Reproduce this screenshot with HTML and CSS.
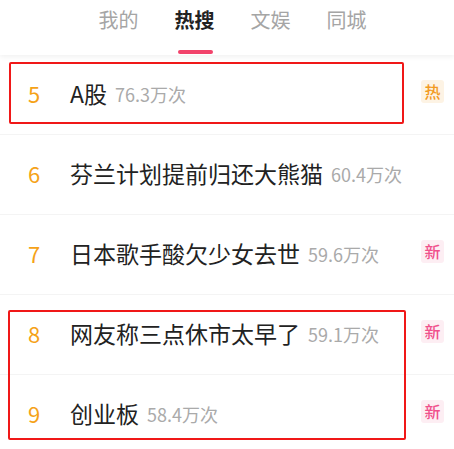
FILE: index.html
```html
<!DOCTYPE html>
<html lang="zh-CN">
<head>
  <meta charset="UTF-8" />
  <meta name="viewport" content="width=device-width, initial-scale=1.0"/>
  <title>热搜</title>
  <link rel="stylesheet" href="styles.css">
</head>
<body>
  <div class="tabs">
    <div class="tab">我的</div>
    <div class="tab active">热搜</div>
    <div class="tab">文娱</div>
    <div class="tab">同城</div>
  </div>

  <div class="list">
    <div class="row">
      <span class="rank">5</span>
      <span class="title">A股</span>
      <span class="count">76.3万次</span>
      <span class="badge hot">热</span>
    </div>
    <div class="row">
      <span class="rank">6</span>
      <span class="title">芬兰计划提前归还大熊猫</span>
      <span class="count">60.4万次</span>
    </div>
    <div class="row">
      <span class="rank">7</span>
      <span class="title">日本歌手酸欠少女去世</span>
      <span class="count">59.6万次</span>
      <span class="badge new">新</span>
    </div>
    <div class="row">
      <span class="rank">8</span>
      <span class="title">网友称三点休市太早了</span>
      <span class="count">59.1万次</span>
      <span class="badge new">新</span>
    </div>
    <div class="row">
      <span class="rank">9</span>
      <span class="title">创业板</span>
      <span class="count">58.4万次</span>
      <span class="badge new">新</span>
    </div>

    <div class="mark mark-one"></div>
    <div class="mark mark-two"></div>
  </div>
</body>
</html>
```

FILE: styles.css
```css
body {
  margin: 0;
  background: #fff;
  font-family: "Noto Sans CJK SC", "Noto Sans", sans-serif;
}

.tabs {
  height: 55px;
  display: flex;
  justify-content: center;
  padding-left: 11px;
  box-shadow: 0 2px 5px rgba(0, 0, 0, 0.06);
}

.tab {
  width: 76px;
  text-align: center;
  font-size: 20px;
  line-height: 40px;
  color: #a5a5a5;
  position: relative;
}

.tab.active {
  color: #222;
  font-weight: bold;
}

.tab.active::after {
  content: "";
  position: absolute;
  left: 21px;
  top: 50px;
  width: 35px;
  height: 4px;
  border-radius: 2px;
  background: #f2436b;
}

.list {
  position: relative;
}

.row {
  height: 80px;
  display: flex;
  align-items: center;
  border-bottom: 1px solid #f4f4f4;
  box-sizing: border-box;
  padding-left: 28px;
  padding-right: 10px;
  padding-bottom: 3px;
}

.rank {
  width: 42px;
  font-size: 22px;
  color: #f5a218;
}

.title {
  font-size: 23px;
  color: #222;
}

.count {
  margin-left: 8px;
  font-size: 18px;
  color: #aaa;
  flex: 1;
  padding-top: 2px;
}

.badge {
  width: 23px;
  height: 23px;
  border-radius: 3px;
  font-size: 16px;
  font-weight: 500;
  line-height: 23px;
  text-align: center;
  margin-top: -4px;
}

.badge.hot {
  background: #fdf3e4;
  color: #f29a1f;
}

.badge.new {
  background: #fdeef3;
  color: #f0508b;
}

.mark {
  position: absolute;
  border: 2px solid #f01818;
  border-radius: 2px;
}

.mark-one {
  left: 9px;
  top: 7px;
  width: 391px;
  height: 58px;
}

.mark-two {
  left: 8px;
  top: 255px;
  width: 394px;
  height: 126px;
}
```
